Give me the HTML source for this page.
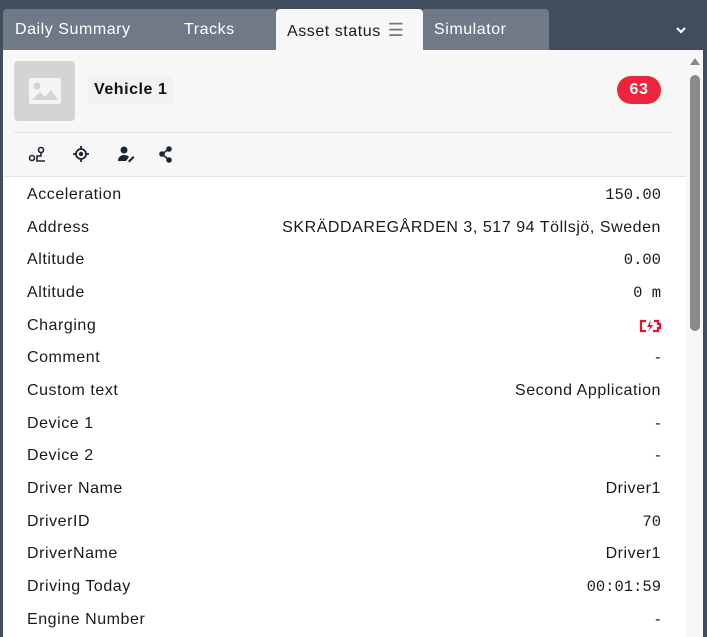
<!DOCTYPE html><html><head><style>
body{margin:0;width:707px;height:637px;background:#414d5c;font-family:"Liberation Sans",sans-serif;overflow:hidden;position:relative;letter-spacing:0.55px}
.tab{position:absolute;top:9px;height:41px;line-height:42px;font-size:16px;color:#fff;background:#6f7a86}
.panel{position:absolute;left:3px;top:50px;width:700px;height:587px;background:#fff}
.hdr{position:absolute;left:0;top:0;width:683px;height:127px;background:#f7f7f7}
.sb{position:absolute;left:683px;top:0;width:17px;height:587px;background:#f7f7f7}
.row{position:absolute;left:24px;width:634px;font-size:16px;color:#1a1a1a;height:20px;line-height:20px}
.row span{position:absolute;right:0}
.m{font-family:"Liberation Mono",monospace;font-size:15.5px;letter-spacing:0}
</style></head><body>
<div class="tab" style="left:3px;width:172px;border-radius:4px 0 0 0;padding-left:12px;box-sizing:border-box">Daily Summary</div>
<div class="tab" style="left:175px;width:101px;padding-left:9px;box-sizing:border-box">Tracks</div>
<div class="tab" style="left:276px;width:147px;background:#f7f7f7;color:#1a1a1a;border-radius:4px 4px 0 0;padding-left:11px;box-sizing:border-box">Asset status <span style="color:#777;font-size:18px;margin-left:2px">☰</span></div>
<div class="tab" style="left:423px;width:126px;border-radius:0 4px 0 0;padding-left:11px;box-sizing:border-box">Simulator</div>
<svg style="position:absolute;left:675px;top:25px" width="12" height="10"><path d="M2 3l4 4 4-4" stroke="#fff" stroke-width="2.2" fill="none"/></svg>
<div class="panel">
<div class="hdr">
<div style="position:absolute;left:11px;top:11px;width:61px;height:60px;background:#d4d4d4;border-radius:4px"></div>
<svg style="position:absolute;left:26px;top:28px" width="32" height="26"><rect x="0" y="0" width="32" height="26" rx="2" fill="#f4f4f4"/><circle cx="8" cy="8" r="3.5" fill="#d4d4d4"/><path d="M3 22l8-8 5 5 6-7 7 10z" fill="#d4d4d4"/></svg>
<div style="position:absolute;left:85px;top:26px;height:28px;padding:0 6px;line-height:28px;background:#f2f2f2;font-weight:bold;font-size:16px;color:#111">Vehicle 1</div>
<div style="position:absolute;left:614px;top:26px;width:44px;height:28px;border-radius:14px;background:#ef233c;color:#fff;font-weight:bold;font-size:16px;line-height:28px;text-align:center">63</div>
<div style="position:absolute;left:11px;top:82px;width:658px;height:1px;background:#dde3ea"></div>
<svg style="position:absolute;left:24px;top:95px" width="150" height="20" fill="#1c2633">
<circle cx="5" cy="13" r="2.5" fill="none" stroke="#1c2633" stroke-width="1.6"/><circle cx="14" cy="5" r="2.5" fill="none" stroke="#1c2633" stroke-width="1.6"/><path d="M14 8v3h-4v5h8" fill="none" stroke="#1c2633" stroke-width="1.6"/>
<circle cx="54" cy="9" r="5" fill="none" stroke="#1c2633" stroke-width="1.8"/><circle cx="54" cy="9" r="2.2"/><path d="M54 1v3M54 14v3M46 9h3M59 9h3" stroke="#1c2633" stroke-width="1.8"/>
<circle cx="97" cy="5" r="3.5"/><path d="M91 16c0-4 3-6 6-6s4 1 5 2l-3 4z"/><path d="M101 16l5-5 1.5 1.5-5 5z"/>
<circle cx="147" cy="4" r="2.8" transform="translate(-5,0)"/><circle cx="135" cy="9" r="2.8"/><circle cx="142" cy="15" r="2.8"/><path d="M142 4l-7 5 7 6" stroke="#1c2633" stroke-width="1.6" fill="none"/>
</svg>
</div>
<div style="position:absolute;left:0;top:126px;width:683px;height:1px;background:#dde3ea"></div>
<div class="sb"><svg style="position:absolute;left:3px;top:6px" width="12" height="10"><path d="M1 9L6 2l5 7z" fill="#888"/></svg><div style="position:absolute;left:4px;top:25px;width:10px;height:256px;border-radius:5px;background:#8a8a8a"></div></div>
<div class="row" style="top:135px">Acceleration<span class="m">150.00</span></div>
<div class="row" style="top:168px">Address<span>SKRÄDDAREGÅRDEN 3, 517 94 Töllsjö, Sweden</span></div>
<div class="row" style="top:200px">Altitude<span class="m">0.00</span></div>
<div class="row" style="top:233px">Altitude<span class="m">0 m</span></div>
<div class="row" style="top:266px">Charging<span><svg width="22" height="14" style="margin-top:3px"><path d="M7 2H2v10h5M15 2h4v3h2v4h-2v3h-5" fill="none" stroke="#e8112d" stroke-width="2.2"/><path d="M12 1L8 8h3l-2 5 5-7h-3z" fill="#e8112d"/></svg></span></div>
<div class="row" style="top:298px">Comment<span>-</span></div>
<div class="row" style="top:331px">Custom text<span>Second Application</span></div>
<div class="row" style="top:364px">Device 1<span>-</span></div>
<div class="row" style="top:396px">Device 2<span>-</span></div>
<div class="row" style="top:429px">Driver Name<span>Driver1</span></div>
<div class="row" style="top:462px">DriverID<span class="m">70</span></div>
<div class="row" style="top:494px">DriverName<span>Driver1</span></div>
<div class="row" style="top:527px">Driving Today<span class="m">00:01:59</span></div>
<div class="row" style="top:560px">Engine Number<span>-</span></div>
</div>
</body></html>
